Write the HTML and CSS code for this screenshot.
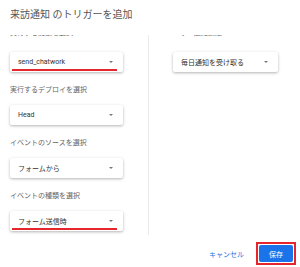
FILE: index.html
```html
<!DOCTYPE html>
<html lang="ja">
<head>
    <meta charset="UTF-8" />
    <meta name="viewport" content="width=device-width, initial-scale=1.0" />
    <title>トリガーを追加</title>
    <link rel="stylesheet" href="styles.css">
</head>

<body>
    <div class="dialog">
        <h1 class="title">来訪通知 のトリガーを追加</h1>

        <div class="content">
            <div class="col col-left">
                <div class="fields">
                    <div class="field">
                        <div class="label">実行する関数を選択</div>
                        <div class="select marked">
                            <span>send_chatwork</span>
                            <i class="arrow"></i>
                        </div>
                    </div>
                    <div class="field">
                        <div class="label">実行するデプロイを選択</div>
                        <div class="select">
                            <span>Head</span>
                            <i class="arrow"></i>
                        </div>
                    </div>
                    <div class="field">
                        <div class="label">イベントのソースを選択</div>
                        <div class="select">
                            <span>フォームから</span>
                            <i class="arrow"></i>
                        </div>
                    </div>
                    <div class="field">
                        <div class="label">イベントの種類を選択</div>
                        <div class="select marked">
                            <span>フォーム送信時</span>
                            <i class="arrow"></i>
                        </div>
                    </div>
                </div>
            </div>

            <div class="col col-right">
                <div class="fields">
                    <div class="field">
                        <div class="label">エラー通知設定 +</div>
                        <div class="select">
                            <span>毎日通知を受け取る</span>
                            <i class="arrow"></i>
                        </div>
                    </div>
                </div>
            </div>
        </div>

        <!-- Footer buttons -->
        <div class="actions">
            <button class="btn-text">キャンセル</button>
            <div class="highlight">
                <button class="btn-save">保存</button>
            </div>
        </div>
    </div>
</body>
</html>
```

FILE: styles.css
```css
body {
    margin: 0;
    background: #ffffff;
    font-family: Roboto, "Noto Sans CJK JP", sans-serif;
    color: #333333;
}

.dialog {
    width: 300px;
    height: 267px;
    overflow: hidden;
}

.title {
    margin: 0;
    padding: 9px 10px 0;
    height: 25px;
    box-sizing: border-box;
    font-size: 10px;
    line-height: 12px;
    font-weight: normal;
    color: #555555;
}

/* scrolled area: first labels are cut at the top */
.content {
    display: flex;
    height: 200px;
    margin-top: 10px;
    overflow: hidden;
}

.col-left {
    width: 113px;
    padding: 0 25px 0 10px;
    border-right: 1px solid #ebebeb;
}

.col-right {
    width: 105px;
    padding-left: 24px;
}

.fields {
    margin-top: -8px;
}

.field {
    margin-bottom: 12px;
}

.label {
    font-size: 7px;
    line-height: 12px;
    color: #666666;
    margin-bottom: 9px;
    white-space: nowrap;
}

.field:first-child .label {
    margin-bottom: 13px;
}

.select {
    position: relative;
    display: flex;
    align-items: center;
    justify-content: space-between;
    height: 20px;
    padding: 0 10px 0 8px;
    border-radius: 2px;
    background: #ffffff;
    box-shadow: 0 1px 3px rgba(0, 0, 0, 0.3);
    font-size: 7px;
    color: #333333;
    white-space: nowrap;
}

.arrow {
    width: 0;
    height: 0;
    border-left: 2.5px solid transparent;
    border-right: 2.5px solid transparent;
    border-top: 2.5px solid #777777;
}

/* red annotation line under the chosen values */
.select.marked::after {
    content: "";
    position: absolute;
    left: 2px;
    right: 6px;
    bottom: 1px;
    height: 2px;
    background: #e5262d;
}

.actions {
    display: flex;
    justify-content: flex-end;
    align-items: center;
    padding-right: 4px;
    margin-top: 7px;
}

.btn-text {
    border: none;
    background: none;
    padding: 0;
    margin-right: 12px;
    font-family: inherit;
    font-size: 7px;
    color: #1a73e8;
}

.highlight {
    border: 2px solid #e5262d;
    padding: 1px;
}

.btn-save {
    display: block;
    width: 34px;
    height: 17px;
    border: none;
    border-radius: 2px;
    background: #1a73e8;
    color: #ffffff;
    font-family: inherit;
    font-size: 7px;
    padding: 0;
}
```
